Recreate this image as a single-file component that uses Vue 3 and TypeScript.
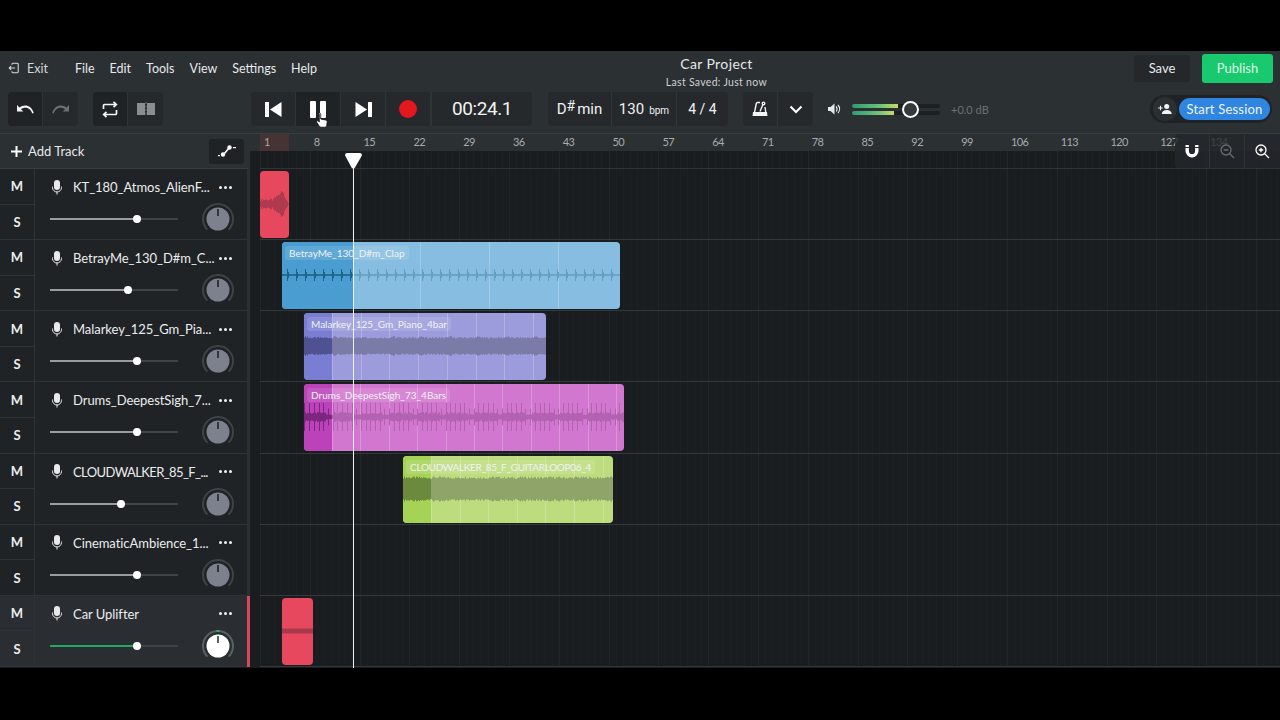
<script setup lang="ts">
interface Track {
  name: string
  vol: number
  active?: boolean
}

interface Clip {
  row: number
  left: number
  width: number
  color: string
  played: string
  playedTo: number
  wave: string
  waveDark: string
  kind: 'spike' | 'clap' | 'blob' | 'drums' | 'guitar' | 'line'
  label?: string
  lineStart?: number
  lineStep?: number
}

const menus = ['File', 'Edit', 'Tools', 'View', 'Settings', 'Help']

const bars = ['1', '8', '15', '22', '29', '36', '43', '50', '57', '64', '71', '78', '85', '92', '99', '106', '113', '120', '127', '134']

const tracks: Track[] = [
  { name: 'KT_180_Atmos_AlienF...', vol: 87 },
  { name: 'BetrayMe_130_D#m_C...', vol: 78 },
  { name: 'Malarkey_125_Gm_Pia...', vol: 87 },
  { name: 'Drums_DeepestSigh_7...', vol: 87 },
  { name: 'CLOUDWALKER_85_F_...', vol: 71 },
  { name: 'CinematicAmbience_1...', vol: 87 },
  { name: 'Car Uplifter', vol: 87, active: true },
]

const clips: Clip[] = [
  { row: 0, left: 260, width: 29, color: '#e8485d', played: '#e8485d', playedTo: 0, wave: '#b03a4d', waveDark: '#b03a4d', kind: 'spike' },
  { row: 1, left: 282, width: 338, color: '#86bde0', played: '#4a9dd1', playedTo: 71, wave: '#639fc1', waveDark: '#1f6288', kind: 'clap', label: 'BetrayMe_130_D#m_Clap', lineStart: 138, lineStep: 69 },
  { row: 2, left: 304, width: 242, color: '#9c9cdc', played: '#7a7ed3', playedTo: 28, wave: '#7b7ba8', waveDark: '#4f5190', kind: 'blob', label: 'Malarkey_125_Gm_Piano_4bar', lineStart: 28, lineStep: 28.7 },
  { row: 3, left: 304, width: 320, color: '#d277cf', played: '#bb42b8', playedTo: 28, wave: '#b262b0', waveDark: '#7d2680', kind: 'drums', label: 'Drums_DeepestSigh_73_4Bars', lineStart: 28, lineStep: 28.4 },
  { row: 4, left: 403, width: 210, color: '#bcdc7e', played: '#a5d356', playedTo: 28, wave: '#8ea469', waveDark: '#6c8a3e', kind: 'guitar', label: 'CLOUDWALKER_85_F_GUITARLOOP06_4', lineStart: 28, lineStep: 28.6 },
  { row: 6, left: 282, width: 31, color: '#e8485d', played: '#e8485d', playedTo: 0, wave: '#a8384a', waveDark: '#a8384a', kind: 'line' },
]

// 同じ波形が毎回出るように簡単な擬似乱数
function noise(i: number): number {
  const n = Math.sin(i * 12.9898) * 43758.5453
  return n - Math.floor(n)
}

function amp(c: Clip, x: number): number {
  switch (c.kind) {
    case 'spike':
      if (x < 14) return 3 + noise(x) * 2.5
      if (x < 21) return 5 + (x - 14) * 0.7 + noise(x) * 2
      if (x < 24) return 13 - (x - 21)
      return x < 28 ? 7 - (x - 24) * 1.5 : 0.5
    case 'clap': {
      const p = (x + 4) % 9
      return p < 1 ? 6 : p < 2 || p > 8 ? 3 : 0.8
    }
    case 'blob':
      return 7.5 + noise(x) * 1.5 + ((x % 28.7) < 4 ? 1 : 0)
    case 'drums': {
      const p = x % 28.4
      const spike = x % 4.7 < 1 ? 14 : 3 + noise(x) * 2
      return spike * (p < 22 ? 1 : 0.6)
    }
    case 'guitar':
      return 10.5 + noise(x) * 2.2 - (x % 28.6) * 0.02
    default:
      return 2.5
  }
}

function wavePath(c: Clip, from: number, to: number): string {
  let d = ''
  for (let x = from; x < to; x++) {
    const a = amp(c, x)
    d += `M${x + 0.5} ${33 - a}V${33 + a}`
  }
  return d
}

function beatLines(c: Clip): number[] {
  if (!c.lineStep) return []
  const out: number[] = []
  for (let x = c.lineStart ?? 0; x < c.width - 2; x += c.lineStep) out.push(Math.round(x))
  return out
}

function clipsOf(row: number): Clip[] {
  return clips.filter((c) => c.row === row)
}

function isCaps(s: string): boolean {
  return /^[A-Z]{4}/.test(s)
}
</script>

<template>
  <div class="screen">
    <div class="daw">
      <header class="menubar">
        <button class="exit">
          <svg width="11" height="12" viewBox="0 0 14 14" fill="none" stroke="#d5d7d8" stroke-width="1.4">
            <path d="M5 3V2.2C5 1.5 5.5 1 6.2 1h5.6c.7 0 1.2.5 1.2 1.2v9.6c0 .7-.5 1.2-1.2 1.2H6.2C5.5 13 5 12.5 5 11.8V11" />
            <path d="M9 7H1.5M4 4.5 1.5 7 4 9.5" />
          </svg>
          Exit
        </button>
        <nav class="menus">
          <span v-for="m in menus" :key="m">{{ m }}</span>
        </nav>
        <div class="title">
          <div class="project">Car Project</div>
          <div class="saved">Last Saved: Just now</div>
        </div>
        <button class="save">Save</button>
        <button class="publish">Publish</button>
      </header>

      <section class="toolbar">
        <div class="group">
          <button class="tbtn w35 on">
            <svg width="17" height="11" viewBox="0 0 17 11" fill="#f2f3f3"><path d="M0 1v6.5h6.3L4 5.300C5.200 4.300 6.600 3.800 8.300 3.800c2.700 0 5.500 1.500 7 5.700l1.500-.5C15 3.500 11.800 1.500 8.300 1.500 6 1.500 4 2.300 2.400 3.500Z" /></svg>
          </button>
          <button class="tbtn w35">
            <svg width="17" height="11" viewBox="0 0 17 11" fill="#6d7173"><path d="M17 1v6.500h-6.300L13 5.300C11.800 4.300 10.400 3.800 8.700 3.800c-2.700 0-5.500 1.500-7 5.700L.2 9C2 3.500 5.200 1.500 8.700 1.500c2.300 0 4.300.8 5.900 2Z" /></svg>
          </button>
        </div>
        <div class="group loopgroup">
          <button class="tbtn w35 on">
            <svg width="16" height="17" viewBox="0 0 16 17" fill="none" stroke="#f2f3f3" stroke-width="1.7">
              <path d="M1.500 8V4.500c0-.6.400-1 1-1H14M14.500 9v3.500c0 .6-.4 1-1 1H2" />
              <path d="M11.500 1 14.300 3.500 11.500 6M4.500 11 1.700 13.500 4.500 16" />
            </svg>
          </button>
          <button class="tbtn w35">
            <svg width="18" height="14" viewBox="0 0 18 14" fill="#8b8e90">
              <rect x="0" y="1" width="8" height="12" /><rect x="10" y="1" width="8" height="12" />
              <path d="M8.600 0h.8v2h-.8zM8.600 3.500h.8v2h-.8zM8.600 7h.8v2h-.8zM8.600 10.500h.8v2h-.8z" />
            </svg>
          </button>
        </div>
        <div class="group transport">
          <button class="tbtn w45">
            <svg width="17" height="15" viewBox="0 0 17 15" fill="#fff"><rect width="4" height="15" /><path d="M16.500 0v15L5 7.500Z" /></svg>
          </button>
          <button class="tbtn w45 on pause">
            <svg width="16" height="17" viewBox="0 0 16 17" fill="#fff"><rect width="6" height="17" rx="1" /><rect x="10" width="6" height="17" rx="1" /></svg>
          </button>
          <button class="tbtn w45">
            <svg width="17" height="15" viewBox="0 0 17 15" fill="#fff"><path d="M.5 0v15L12 7.500Z" /><rect x="13" width="4" height="15" /></svg>
          </button>
          <button class="tbtn w45"><span class="rec"></span></button>
          <div class="time">00:24.1</div>
        </div>
        <div class="group keys">
          <div class="cell key">D<sup>#</sup>min</div>
          <div class="cell bpm">130<small>bpm</small></div>
          <div class="cell sig">4 / 4</div>
        </div>
        <div class="group metro">
          <button class="tbtn w35">
            <svg width="16" height="16" viewBox="0 0 16 16" fill="none" stroke="#f4f4f4" stroke-width="1.400">
              <path d="M2.500 11.500 4.300 2.500C4.500 1.800 5 1.500 5.500 1.500H8M8 10.500l2.700-6.500" />
              <circle cx="11.500" cy="2.400" r="1.300" />
              <path d="M13 6 13.800 11.500" />
              <path d="M1 11h14l.5 4H.5Z" fill="#f4f4f4" stroke="none" />
            </svg>
          </button>
          <button class="tbtn w35">
            <svg width="14" height="9" viewBox="0 0 14 9" fill="none" stroke="#fff" stroke-width="2"><path d="M1.500 1.500 7 7l5.500-5.500" /></svg>
          </button>
        </div>
        <svg class="speaker" width="14" height="12" viewBox="0 0 14 12" fill="#e6e7e8">
          <path d="M0 4h2.500L6.500.5v11L2.500 8H0Z" />
          <path d="M8 3.500a3.500 3.500 0 0 1 0 5M10 2a6 6 0 0 1 0 8" fill="none" stroke="#e6e7e8" stroke-width="1.200" />
        </svg>
        <div class="meter">
          <div class="mrow"><i style="width: 46px"></i></div>
          <div class="mrow"><i style="width: 42px"></i></div>
          <span class="vknob"></span>
        </div>
        <span class="db">+0.0 dB</span>
        <div class="session">
          <span class="invite">
            <svg width="14" height="10" viewBox="0 0 14 10" fill="#f4f4f4">
              <circle cx="8.700" cy="2.500" r="2.500" />
              <path d="M3.800 10c0-2.500 2.200-4 4.900-4s5 1.500 5 4ZM2 1.800h1v1.700h1.700v1H3v1.700H2V4.500H.3v-1H2Z" />
            </svg>
          </span>
          <button class="start">Start Session</button>
        </div>
      </section>

      <section class="rulerrow">
        <div class="addrow">
          <span class="add">
            <svg width="11" height="11" viewBox="0 0 11 11" fill="#fff"><path d="M4.500 0h2v4.500H11v2H6.500V11h-2V6.500H0v-2h4.500Z" /></svg>
            Add Track
          </span>
          <button class="auto">
            <svg width="18" height="14" viewBox="0 0 18 14" fill="#fff">
              <path d="M6 10 11 4" stroke="#fff" stroke-width="1.500" />
              <circle cx="5" cy="10.500" r="2.200" /><circle cx="11.500" cy="3.500" r="2.200" />
              <rect x="0" y="11" width="2" height="1.200" /><rect x="15" y="3" width="3" height="1.200" />
            </svg>
          </button>
        </div>
        <div class="rulerwrap">
          <div class="ruler">
            <span v-for="(b, i) in bars" :key="b" class="bar" :class="{ hot: i === 0 }">{{ b }}</span>
          </div>
          <div class="subruler"></div>
          <div class="viewtools">
            <button class="vbtn">
              <svg width="14" height="14" viewBox="0 0 14 14" fill="none" stroke="#fff" stroke-width="3.400">
                <path d="M2.200 1v6a4.800 4.800 0 0 0 9.600 0V1" />
                <path d="M0 3.500h5M9 3.500h5" stroke="#23272a" stroke-width="1" />
              </svg>
            </button>
            <button class="vbtn">
              <svg width="15" height="15" viewBox="0 0 15 15" fill="none" stroke="#696d6f" stroke-width="1.300">
                <circle cx="6" cy="6" r="5" /><path d="M3.800 6h4.400M9.700 9.700 14 14" />
              </svg>
            </button>
            <button class="vbtn">
              <svg width="15" height="15" viewBox="0 0 15 15" fill="none" stroke="#fff" stroke-width="1.300">
                <circle cx="6" cy="6" r="5" /><path d="M3.800 6h4.400M6 3.800v4.400M9.700 9.700 14 14" />
              </svg>
            </button>
          </div>
        </div>
      </section>

      <section class="rows">
        <div v-for="(t, i) in tracks" :key="t.name" class="row" :class="{ active: t.active }">
          <div class="ms">
            <span>M</span>
            <span>S</span>
          </div>
          <div class="head">
            <div class="headtop">
              <svg class="mic" width="10" height="15" viewBox="0 0 10 15" fill="#e8e9ea">
                <rect x="2" y="0" width="6" height="10" rx="3" />
                <path d="M.5 6.500v1a4.500 4.500 0 0 0 9 0v-1" fill="none" stroke="#e8e9ea" stroke-width="1" />
                <rect x="4.500" y="11.500" width="1" height="3" />
              </svg>
              <span class="name" :class="{ tight: isCaps(t.name) }">{{ t.name }}</span>
              <span class="dots"><i></i><i></i><i></i></span>
            </div>
            <div class="headbottom">
              <div class="slider">
                <div class="fill" :style="{ width: t.vol + 'px' }"></div>
                <span class="thumb" :style="{ left: t.vol + 'px' }"></span>
              </div>
              <svg class="pan" width="32" height="32" viewBox="0 0 32 32" fill="none">
                <path d="M5.400 26.600a15 15 0 1 1 21.200 0" :stroke="t.active ? '#5b6063' : '#3e4346'" stroke-width="2" />
                <path v-if="t.active" d="M14.500 1.100a15 15 0 0 1 3 0" stroke="#29b36b" stroke-width="2" />
                <circle cx="16" cy="16" r="11.500" :fill="t.active ? '#fff' : '#7c818d'" />
                <path d="M16 6v7" :stroke="t.active ? '#26292b' : '#1b1d20'" stroke-width="1.500" />
              </svg>
            </div>
          </div>
          <div class="edge"></div>
          <div class="lane">
            <div
              v-for="c in clipsOf(i)"
              :key="c.left"
              class="clip"
              :style="{ left: c.left - 260 + 'px', width: c.width + 'px', background: c.color }"
            >
              <div class="played" :style="{ width: c.playedTo + 'px', background: c.played }"></div>
              <i v-for="x in beatLines(c)" :key="x" class="beat" :style="{ left: x + 'px' }"></i>
              <svg class="wave" :width="c.width" height="67">
                <path :d="wavePath(c, 0, c.playedTo)" :stroke="c.waveDark" />
                <path :d="wavePath(c, c.playedTo, c.width)" :stroke="c.wave" />
              </svg>
              <span v-if="c.label" class="cliplabel" :class="{ tight: isCaps(c.label) }">{{ c.label }}</span>
            </div>
          </div>
        </div>
      </section>

      <div class="playhead"></div>
      <svg class="cap" width="17" height="16" viewBox="0 0 17 16"><path d="M2.500 0h12c2 0 3 1.500 2 3.200L10 14.500c-.8 1.300-2.700 1.300-3.500 0L.5 3.200C-.5 1.500.500 0 2.500 0Z" fill="#fff" /></svg>
      <svg class="hand" width="12" height="16" viewBox="0 0 12 16">
        <path d="M3.500 1c.7 0 1.200.5 1.200 1.200V7l4.800 1c1 .2 1.700 1 1.700 2l-.5 3.500c-.1 1-.9 1.700-1.900 1.700H5c-.7 0-1.300-.3-1.700-.9L.8 10.400c-.4-.6-.2-1.200.3-1.500.4-.3 1-.2 1.400.2l.8 1V2.200C2.300 1.500 2.800 1 3.500 1Z" fill="#fff" stroke="#111" stroke-width="0.800" />
      </svg>
    </div>
  </div>
</template>

<style>
html,
body {
  margin: 0;
  background: #000;
}
</style>

<style scoped>
.screen {
  width: 1280px;
  height: 720px;
  background: #000;
  padding: 51px 0 52px;
  box-sizing: border-box;
  overflow: hidden;
  font-family: Lato, "Open Sans", sans-serif;
  color: #e8e9ea;
}
.daw {
  position: relative;
  height: 617px;
  display: flex;
  flex-direction: column;
  background: #2b3033;
}
button {
  font: inherit;
  color: inherit;
  border: 0;
  padding: 0;
  background: none;
}

.menubar {
  height: 39px;
  display: flex;
  align-items: center;
  padding: 0 7px 5px 8px;
  box-sizing: border-box;
  font-size: 12.500px;
}
.exit {
  width: 54px;
  display: flex;
  align-items: center;
  gap: 8px;
  color: #d5d7d8;
}
.menus {
  margin-left: 13px;
  display: flex;
  gap: 15px;
}
.title {
  align-self: flex-start;
  margin: 4px 367px 0 auto;
  text-align: center;
}
.project {
  font-size: 14px;
  line-height: 17px;
  letter-spacing: 0.4px;
}
.saved {
  margin-top: 3px;
  font-size: 10.500px;
  line-height: 15px;
  color: #cfd1d2;
  letter-spacing: 0.3px;
}
.save {
  width: 56px;
  height: 27px;
  background: #24282b;
  border-radius: 3px;
  font-size: 13px;
}
.publish {
  width: 71px;
  height: 29px;
  margin-left: 12px;
  border-radius: 3px;
  background: #19c96d;
  font-size: 13px;
  color: #dff7ea;
}

.toolbar {
  height: 44px;
  display: flex;
  align-items: flex-start;
  padding: 2px 8px 0;
  border-bottom: 1px solid #383d40;
  box-sizing: border-box;
}
.group {
  display: flex;
  height: 34px;
  background: #25292c;
  border-radius: 4px;
  overflow: hidden;
}
.loopgroup {
  margin-left: 15px;
}
.transport {
  margin-left: 88px;
}
.keys {
  margin-left: 16px;
}
.metro {
  margin-left: 15px;
}
.tbtn {
  height: 34px;
  display: flex;
  align-items: center;
  justify-content: center;
  border-right: 1px solid #2f3437;
  box-sizing: border-box;
}
.tbtn:last-child {
  border-right: 0;
}
.w35 {
  width: 35px;
}
.w45 {
  width: 45px;
}
.on {
  background: #1f2326;
}
.rec {
  width: 18px;
  height: 18px;
  border-radius: 50%;
  background: #e4161e;
}
.time {
  width: 101px;
  text-align: center;
  font: 19px/34px Roboto, sans-serif;
  letter-spacing: -0.4px;
  color: #f1f2f2;
  border-left: 1px solid #2f3437;
  box-sizing: border-box;
}
.cell {
  height: 34px;
  display: flex;
  align-items: center;
  justify-content: center;
  font: 15px Roboto, sans-serif;
  color: #f1f2f2;
  border-right: 1px solid #32373a;
  box-sizing: border-box;
}
.cell:last-child {
  border-right: 0;
}
.key {
  width: 64px;
}
.key sup {
  font-size: 14px;
  line-height: 1;
  margin: -7px 2px 0 0;
}
.bpm {
  width: 65px;
  font-size: 15px;
}
.bpm small {
  font-size: 10px;
  margin: 3px 0 0 5px;
}
.sig {
  width: 51px;
  font-size: 14px;
}
.speaker {
  margin: 11px 0 0 15px;
}
.meter {
  position: relative;
  width: 88px;
  margin: 12px 0 0 10px;
  display: flex;
  flex-direction: column;
  gap: 3px;
}
.mrow {
  height: 4px;
  border-radius: 2px;
  background: #1d2022;
  overflow: hidden;
}
.mrow i {
  display: block;
  height: 100%;
  background: linear-gradient(90deg, #2e9c74, #6cc07a 60%, #c4dc6c);
}
.vknob {
  position: absolute;
  left: 50px;
  top: -3px;
  width: 13px;
  height: 13px;
  border-radius: 50%;
  background: #34393a;
  border: 2px solid #fff;
}
.db {
  margin: 11px 0 0 11px;
  font-size: 11px;
  color: #6c7073;
}
.session {
  margin: 3px 0 0 auto;
  width: 122px;
  height: 28px;
  border-radius: 14px;
  background: #1f2326;
  display: flex;
  align-items: center;
  padding: 0 2px 0 3px;
  box-sizing: border-box;
}
.invite {
  width: 24px;
  height: 24px;
  border-radius: 50%;
  background: #2b3033;
  display: flex;
  align-items: center;
  justify-content: center;
}
.start {
  margin-left: auto;
  width: 91px;
  height: 22px;
  border-radius: 11px;
  background: #2f85e0;
  color: #eef5fd;
  font-size: 13px;
  letter-spacing: 0.2px;
}

.rulerrow {
  height: 35px;
  display: flex;
}
.addrow {
  width: 248px;
  display: flex;
  align-items: center;
  justify-content: space-between;
  padding: 0 4px 0 11px;
  box-sizing: border-box;
  border-bottom: 1px solid #383d40;
}
.add {
  display: flex;
  align-items: center;
  gap: 6px;
  font-size: 13px;
}
.auto {
  width: 35px;
  height: 25px;
  border-radius: 3px;
  background: #1f2326;
  display: flex;
  align-items: center;
  justify-content: center;
}
.rulerwrap {
  position: relative;
  flex: 1;
  min-width: 0;
  margin-left: 2px;
  background: #1a1d1f;
}
.ruler {
  height: 17px;
  padding-left: 10px;
  display: flex;
  overflow: hidden;
  background: #2b3033;
}
.bar {
  flex: 0 0 49.800px;
  padding-left: 4px;
  box-sizing: border-box;
  font-size: 11px;
  line-height: 15px;
  letter-spacing: -0.6px;
  color: #a7abad;
  white-space: nowrap;
}
.hot {
  background: linear-gradient(90deg, #463434 29px, transparent 29px);
}
.subruler {
  height: 18px;
  margin-left: 10px;
  background:
    repeating-linear-gradient(90deg, #24282a 0 1px, transparent 1px 49.800px),
    repeating-linear-gradient(90deg, #1e2123 0 1px, transparent 1px 7.114px);
  border-bottom: 1px solid #2f3437;
  box-sizing: border-box;
}
.viewtools {
  position: absolute;
  top: 0;
  right: 0;
  height: 34px;
  display: flex;
  background: rgba(35, 39, 42, 0.8);
  border-radius: 3px 0 0 3px;
}
.vbtn {
  width: 35px;
  height: 34px;
  display: flex;
  align-items: center;
  justify-content: center;
  border-right: 1px solid #2f3437;
  box-sizing: border-box;
}
.vbtn:last-child {
  border-right: 0;
}

.rows {
  flex: 1;
  display: flex;
  flex-direction: column;
  background: #1a1d1f;
}
.row {
  height: 71.150px;
  flex: none;
  display: flex;
}
.ms {
  width: 35px;
  flex: none;
  display: flex;
  flex-direction: column;
  background: #1f2326;
  border-right: 1px solid #2e3336;
  border-bottom: 1px solid #2e3336;
  box-sizing: border-box;
}
.ms span {
  flex: 1;
  display: flex;
  align-items: center;
  justify-content: center;
  font-size: 13px;
  font-weight: 700;
  color: #eceded;
}
.ms span:first-child {
  border-bottom: 1px solid #2e3336;
}
.head {
  width: 212px;
  flex: none;
  background: #1f2326;
  border-bottom: 1px solid #2e3336;
  box-sizing: border-box;
  padding: 9px 15px 0 17px;
}
.active .ms,
.active .head {
  background: #2a2e32;
}
.headtop {
  display: flex;
  align-items: center;
  height: 18px;
}
.mic {
  margin-right: 11px;
  flex: none;
}
.name {
  flex: 1;
  font-size: 13px;
  letter-spacing: -0.05px;
  white-space: nowrap;
  color: #eceded;
}
.name.tight {
  letter-spacing: -0.6px;
}
.dots {
  display: flex;
  gap: 2px;
}
.dots i {
  width: 3px;
  height: 3px;
  border-radius: 50%;
  background: #f1f1f1;
}
.headbottom {
  display: flex;
  align-items: center;
  justify-content: space-between;
  margin-top: 7px;
  margin-right: -2px;
}
.slider {
  position: relative;
  width: 128px;
  height: 2px;
  margin-left: -2px;
  background: #3f4447;
}
.fill {
  height: 100%;
  background: #9a9d9f;
}
.active .fill {
  background: #1fa862;
}
.thumb {
  position: absolute;
  top: -3px;
  width: 8px;
  height: 8px;
  margin-left: -4px;
  border-radius: 50%;
  background: #fff;
}
.edge {
  width: 3px;
  flex: none;
  background: #2b3033;
}
.active .edge {
  background: #d9485a;
}
.lane {
  position: relative;
  flex: 1;
  margin-left: 10px;
  background:
    repeating-linear-gradient(90deg, #212527 0 1px, transparent 1px 49.800px),
    repeating-linear-gradient(90deg, #1d2022 0 1px, transparent 1px 7.114px),
    #1a1d1f;
  border-bottom: 1px solid #33383b;
  box-sizing: border-box;
}
.clip {
  position: absolute;
  top: 2px;
  height: 67px;
  border-radius: 4px;
  overflow: hidden;
}
.played {
  position: absolute;
  left: 0;
  top: 0;
  bottom: 0;
}
.beat {
  position: absolute;
  top: 0;
  bottom: 0;
  width: 1px;
  background: rgba(255, 255, 255, 0.22);
}
.wave {
  position: absolute;
  left: 0;
  top: 0;
}
.cliplabel {
  position: absolute;
  left: 3px;
  top: 4px;
  height: 14px;
  padding: 0 4px;
  border-radius: 3px;
  background: rgba(255, 255, 255, 0.12);
  font-size: 10px;
  line-height: 14px;
  color: #f0f3f5;
  white-space: nowrap;
}
.cliplabel.tight {
  letter-spacing: -0.3px;
}

.playhead {
  position: absolute;
  left: 353px;
  top: 110px;
  bottom: 0;
  width: 1px;
  background: #f1f1f1;
}
.cap {
  position: absolute;
  left: 345px;
  top: 102px;
}
.hand {
  position: absolute;
  left: 316px;
  top: 61px;
}
</style>
